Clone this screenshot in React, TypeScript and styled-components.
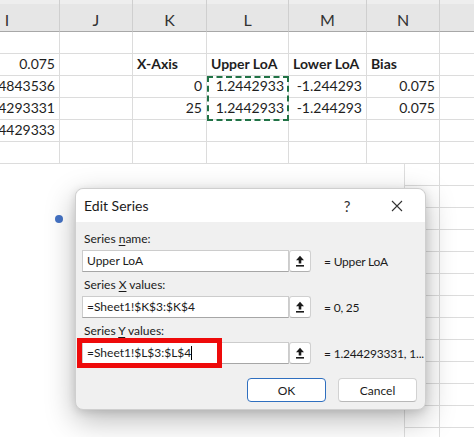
import React from 'react';
import styled, { createGlobalStyle } from 'styled-components';

const GlobalStyle = createGlobalStyle`
  html, body {
    margin: 0;
    padding: 0;
    background: #ffffff;
  }
  * {
    box-sizing: border-box;
  }
`;

const COLS = [105, 73, 74, 82, 78, 73, 80];
const LETTERS = ['I', 'J', 'K', 'L', 'M', 'N', ''];

type Cell = { text?: string; bold?: boolean; align?: 'left' | 'right' };

const ROWS: Cell[][] = [
  [],
  [
    { text: '0.075', align: 'right' },
    {},
    { text: 'X-Axis', bold: true },
    { text: 'Upper LoA', bold: true },
    { text: 'Lower LoA', bold: true },
    { text: 'Bias', bold: true },
  ],
  [
    { text: '1.244843536', align: 'right' },
    {},
    { text: '0', align: 'right' },
    { text: '1.2442933', align: 'right' },
    { text: '-1.244293', align: 'right' },
    { text: '0.075', align: 'right' },
  ],
  [
    { text: '1.244293331', align: 'right' },
    {},
    { text: '25', align: 'right' },
    { text: '1.2442933', align: 'right' },
    { text: '-1.244293', align: 'right' },
    { text: '0.075', align: 'right' },
  ],
  [{ text: '1.244429333', align: 'right' }],
  ...Array.from({ length: 14 }, () => [] as Cell[]),
];

const Page = styled.div`
  position: relative;
  width: 474px;
  height: 437px;
  overflow: hidden;
  background: #ffffff;
`;

const Sheet = styled.div`
  margin-left: -45px;
  display: grid;
  grid-template-columns: ${COLS.map((w) => `${w}px`).join(' ')};
  grid-template-rows: 32px;
  grid-auto-rows: 22px;
  font-family: Lato, 'Liberation Sans', sans-serif;
  font-size: 14px;
  color: #1e1e1e;
`;

const HeaderCell = styled.div`
  display: flex;
  align-items: center;
  justify-content: center;
  padding-top: 8px;
  background: linear-gradient(#eeeeee 0, #eeeeee 4px, #e6e6e6 4px);
  border-right: 1px solid #cfcfcf;
  border-bottom: 1px solid #a8a8a8;
  font-size: 16px;
  color: #333333;
`;

const DataCell = styled.div<{ $bold?: boolean; $align?: 'left' | 'right' }>`
  display: flex;
  align-items: flex-end;
  justify-content: ${(p) => (p.$align === 'right' ? 'flex-end' : 'flex-start')};
  padding: 0 4px 2px 4px;
  border-right: 1px solid #dcdcdc;
  border-bottom: 1px solid #dcdcdc;
  overflow: hidden;
  white-space: nowrap;
  font-weight: ${(p) => (p.$bold ? 700 : 400)};
  line-height: 18px;
`;

const CopyMarquee = styled.div`
  position: absolute;
  left: 207px;
  top: 76px;
  width: 82px;
  height: 45px;
  border: 2px dashed #217346;
  pointer-events: none;
`;

const ChartArea = styled.div`
  position: absolute;
  left: 0;
  top: 164px;
  width: 405px;
  height: 290px;
  background: #ffffff;
  border-right: 1px solid #dedede;
`;

const Marker = styled.span`
  position: absolute;
  left: 55px;
  top: 51px;
  width: 8px;
  height: 8px;
  border-radius: 50%;
  background: #4472c4;
`;

const Dialog = styled.div`
  position: absolute;
  left: 75px;
  top: 188px;
  width: 351px;
  height: 222px;
  border-radius: 8px;
  background: #f0f0f0;
  border: 1px solid #cfcfcf;
  box-shadow: 0 10px 30px rgba(0, 0, 0, 0.28), 0 2px 8px rgba(0, 0, 0, 0.12);
  font-family: Lato, 'Liberation Sans', sans-serif;
  color: #1b1b1b;
  display: flex;
  flex-direction: column;
`;

const TitleBar = styled.div`
  height: 33px;
  background: #ffffff;
  border-radius: 8px 8px 0 0;
  display: flex;
  align-items: center;
  padding-left: 8px;
  font-size: 14px;
`;

const Title = styled.span`
  flex: 1;
`;

const TitleButton = styled.span<{ $w: number }>`
  width: ${(p) => p.$w}px;
  display: flex;
  justify-content: center;
  align-items: center;
  font-size: 15px;
  color: #333333;
`;

const Body = styled.div`
  flex: 1;
  display: flex;
  flex-direction: column;
  padding: 6px 8px 0 6px;
  gap: 2px;
`;

const Field = styled.div`
  display: flex;
  flex-direction: column;
`;

const Label = styled.div`
  height: 22px;
  line-height: 22px;
  font-size: 12px;
  padding-left: 2px;
  u {
    text-decoration-thickness: 1px;
    text-underline-offset: 2px;
  }
`;

const InputRow = styled.div`
  display: flex;
  align-items: center;
  height: 22px;
`;

const InputWrap = styled.div`
  position: relative;
  flex: 0 0 207px;
  height: 22px;
`;

const TextBox = styled.div`
  width: 100%;
  height: 100%;
  background: #ffffff;
  border: 1px solid #cccccc;
  border-bottom-color: #a6a6a6;
  padding: 0 4px;
  font-size: 12px;
  line-height: 20px;
  white-space: nowrap;
  overflow: hidden;
`;

const Caret = styled.span`
  display: inline-block;
  width: 1px;
  height: 14px;
  background: #000000;
  vertical-align: -3px;
`;

const Highlight = styled.div`
  position: absolute;
  left: -5px;
  top: -4px;
  width: 145px;
  height: 30px;
  border: 5px solid #ee0a0a;
  pointer-events: none;
`;

const RefButton = styled.div`
  flex: 0 0 22px;
  height: 22px;
  background: #ffffff;
  border: 1px solid #d0d0d0;
  border-bottom-color: #b0b0b0;
  border-radius: 3px;
  display: flex;
  align-items: center;
  justify-content: center;
`;

const Result = styled.span`
  margin-left: 13px;
  font-size: 12px;
  letter-spacing: -0.2px;
  white-space: nowrap;
`;

const Buttons = styled.div`
  display: flex;
  justify-content: flex-end;
  gap: 12px;
  margin-top: 12px;
`;

const Button = styled.div<{ $primary?: boolean }>`
  width: 79px;
  height: 24px;
  border-radius: 4px;
  background: #ffffff;
  border: 1px solid ${(p) => (p.$primary ? '#2f6fbf' : '#d2d2d2')};
  border-bottom-color: ${(p) => (p.$primary ? '#2f6fbf' : '#b8b8b8')};
  display: flex;
  align-items: center;
  justify-content: center;
  font-size: 12px;
`;

const CollapseIcon = () => (
  <svg width="10" height="12" viewBox="0 0 10 12">
    <path d="M5 0.8 L9 5.2 H6.3 V8.6 H3.7 V5.2 H1 Z" fill="#1b1b1b" />
    <rect x="1" y="10" width="8" height="1.6" fill="#1b1b1b" />
  </svg>
);

const CloseIcon = () => (
  <svg width="12" height="12" viewBox="0 0 12 12">
    <path d="M1 1 L11 11 M11 1 L1 11" stroke="#333333" strokeWidth="1.1" />
  </svg>
);

type FieldProps = {
  before: string;
  accel: string;
  after: string;
  value: React.ReactNode;
  result: string;
  highlighted?: boolean;
};

const SeriesField: React.FC<FieldProps> = ({ before, accel, after, value, result, highlighted }) => (
  <Field>
    <Label>
      {before}
      <u>{accel}</u>
      {after}
    </Label>
    <InputRow>
      <InputWrap>
        <TextBox>{value}</TextBox>
        {highlighted && <Highlight />}
      </InputWrap>
      <RefButton>
        <CollapseIcon />
      </RefButton>
      <Result>{result}</Result>
    </InputRow>
  </Field>
);

export default function App() {
  return (
    <>
      <GlobalStyle />
      <Page>
        <Sheet>
          {LETTERS.map((l, i) => (
            <HeaderCell key={i}>{l}</HeaderCell>
          ))}
          {ROWS.map((row, r) =>
            COLS.map((_, c) => {
              const cell = row[c] || {};
              return (
                <DataCell key={`${r}-${c}`} $bold={cell.bold} $align={cell.align}>
                  {cell.text}
                </DataCell>
              );
            })
          )}
        </Sheet>
        <CopyMarquee />
        <ChartArea>
          <Marker />
        </ChartArea>
        <Dialog>
          <TitleBar>
            <Title>Edit Series</Title>
            <TitleButton $w={44}>?</TitleButton>
            <TitleButton $w={56}>
              <CloseIcon />
            </TitleButton>
          </TitleBar>
          <Body>
            <SeriesField before="Series " accel="n" after="ame:" value="Upper LoA" result="= Upper LoA" />
            <SeriesField
              before="Series "
              accel="X"
              after=" values:"
              value="=Sheet1!$K$3:$K$4"
              result="= 0, 25"
            />
            <SeriesField
              before="Series "
              accel="Y"
              after=" values:"
              value={
                <>
                  =Sheet1!$L$3:$L$4
                  <Caret />
                </>
              }
              result="= 1.244293331, 1..."
              highlighted
            />
            <Buttons>
              <Button $primary>OK</Button>
              <Button>Cancel</Button>
            </Buttons>
          </Body>
        </Dialog>
      </Page>
    </>
  );
}
